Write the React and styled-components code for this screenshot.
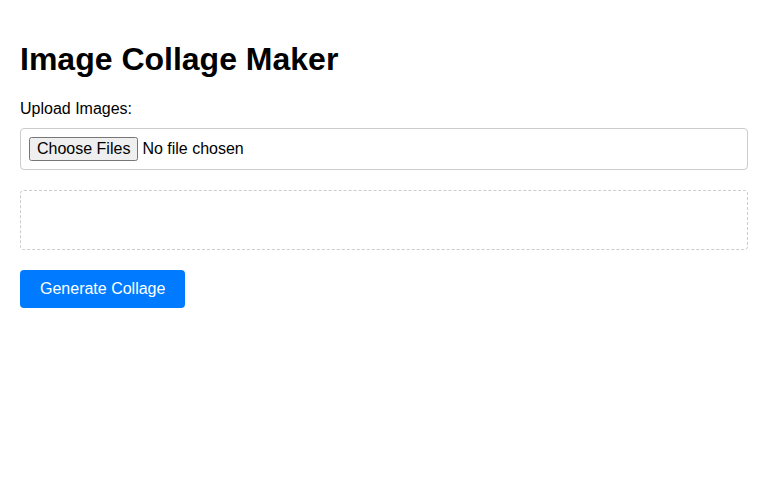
import React from "react";
import styled, { createGlobalStyle } from "styled-components";

const Global = createGlobalStyle`
  * { box-sizing: border-box; }
  html, body { margin: 0; background: #fff; }
  body {
    padding: 20px;
    font-family: "Liberation Sans", Arial, sans-serif;
    color: #000;
  }
`;

const Title = styled.h1`
  font-size: 32px;
  font-weight: bold;
  margin: 21.44px 0;
`;

const Label = styled.label`
  display: block;
  font-size: 16px;
  margin-bottom: 10px;
`;

const FileInput = styled.input`
  display: block;
  width: 100%;
  padding: 8px 8px 6px;
  border: 1px solid #ccc;
  border-radius: 4px;
  font-family: "Liberation Sans", Arial, sans-serif;
  font-size: 16px;
  height: 42px;
`;

const Preview = styled.div`
  margin: 20px 0;
  min-height: 60px;
  border: 1px dashed #ccc;
  border-radius: 4px;
  display: flex;
  flex-wrap: wrap;
  gap: 10px;
`;

const Button = styled.button`
  background: #007bff;
  color: #fff;
  border: none;
  border-radius: 4px;
  padding: 10px 20px;
  font-family: "Liberation Sans", Arial, sans-serif;
  font-size: 16px;
  cursor: pointer;
`;

export default function App() {
  return (
    <>
      <Global />
      <Title>Image Collage Maker</Title>
      <Label htmlFor="files">Upload Images:</Label>
      <FileInput id="files" type="file" multiple accept="image/*" />
      <Preview />
      <Button>Generate Collage</Button>
    </>
  );
}
